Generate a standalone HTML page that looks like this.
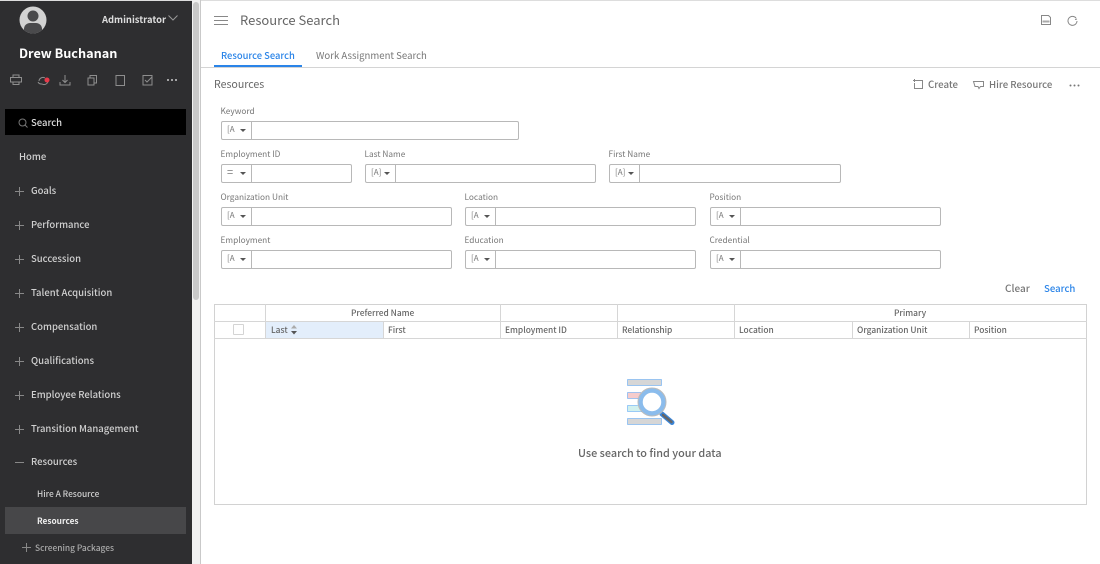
<!DOCTYPE html>
<html><head><meta charset="utf-8"><style>
*{box-sizing:border-box}
html,body{margin:0;padding:0;width:1100px;height:564px;overflow:hidden;background:#fff;font-family:"Noto Sans CJK KR","Liberation Sans",sans-serif;color:#666}
div,span{position:absolute;white-space:nowrap}
svg{position:absolute;overflow:visible}
#r{left:0;top:0;width:1100px;height:564px;overflow:hidden;background:#fff;filter:blur(.3px)}
.n{left:31px;font-size:9.5px;line-height:14px;color:#d0d0d0;font-weight:500}
.s{font-size:8.4px;font-weight:500}
.p{left:15px;width:9px;height:9px}
.p:before{content:"";position:absolute;left:4px;top:0;width:1px;height:9px;background:#888}
.p:after{content:"";position:absolute;left:0;top:4px;width:9px;height:1px;background:#888}
.l{font-size:8.3px;line-height:12px;color:#777;margin-left:-.5px}
.f{height:19px;border:1px solid #b8b8b8;border-radius:2px;background:#fff}
.f i{position:absolute;left:29px;top:0;width:1px;height:17px;background:#b8b8b8}
.f b{position:absolute;left:5px;top:1px;font:400 8px/13px "Noto Sans CJK KR",sans-serif;color:#777}
.f u{position:absolute;left:18px;top:7px;border-left:3px solid transparent;border-right:3px solid transparent;border-top:3px solid #555}
.h{font-size:8.4px;line-height:12px;color:#666;font-weight:500;margin-top:1px}
.v{width:1px;background:#d6d6d6}
.z{height:1px;background:#d6d6d6}
</style></head><body><div id="r">
<div style="left:0;top:0;width:192px;height:564px;background:#2e2e30"></div>
<div style="left:0;top:0;width:1100px;height:1px;background:#ddd"></div>
<div style="left:192px;top:0;width:8px;height:564px;background:#f1f1f1"></div>
<div style="left:193px;top:2px;width:6px;height:298px;background:#c8c8c8;border-radius:3px"></div>
<div style="left:200px;top:0;width:1px;height:564px;background:#c9c9c9"></div>

<svg style="left:19px;top:6px" width="28" height="28" viewBox="0 0 28 28"><defs><clipPath id="c"><circle cx="14" cy="14" r="13.500"/></clipPath></defs><circle cx="14" cy="14" r="13.500" fill="#d2d2d2"/><g clip-path="url(#c)" fill="#4a4a4c"><circle cx="14" cy="10" r="5.500"/><rect x="5" y="17" width="18" height="14" rx="6"/></g></svg>
<div style="left:102px;top:12px;font-size:9.400px;line-height:14px;font-weight:700;color:#ddd">Administrator</div>
<svg style="left:168px;top:15px" width="10" height="6"><path d="M.5.5 5 5 9.500.5" fill="none" stroke="#999"/></svg>
<div style="left:19px;top:43px;font-size:12.700px;line-height:20px;font-weight:700;color:#fff">Drew Buchanan</div>

<svg style="left:10px;top:74px" width="170" height="13" fill="none" stroke="#8e8e8e" stroke-width="1">
<path d="M3 3.500V1h6v2.500M.5 3.500h11V8h-11zM3 8v2.500h6V8"/>
<path d="M29 7a4 4 0 0 1 6-3M38 6a4 4 0 0 1-6 4 4 4 0 0 1-4-2"/><circle cx="37" cy="6" r="2.500" fill="#e8394a" stroke="none"/>
<path d="M55 1v7M52.500 6 55 8.500 57.500 6M50 8v3h10V8"/>
<path d="M78 4h6v7h-6zM80 4V1.500h6.500V9H84"/>
<path d="M106 1.500h8.500v10H106z"/>
<path d="M133 1.500h9v9.500h-9zM135 6l2 2 5-5"/>
<path d="M157 6h2M161 6h2M165 6h2" stroke="#ccc" stroke-width="1.500"/>
</svg>

<div style="left:5px;top:109px;width:181px;height:26px;background:#000"></div>
<svg style="left:18px;top:118px" width="10" height="10" fill="none" stroke="#777"><circle cx="4.500" cy="4.500" r="3.500"/><path d="M7 7l2.500 2.500"/></svg>
<div class="n" style="top:115px;color:#ddd">Search</div>
<div class="n" style="left:19px;top:149px">Home</div>

<div class="p" style="top:187px"></div><div class="n" style="top:183px">Goals</div>
<div class="p" style="top:221px"></div><div class="n" style="top:217px">Performance</div>
<div class="p" style="top:255px"></div><div class="n" style="top:251px">Succession</div>
<div class="p" style="top:289px"></div><div class="n" style="top:285px">Talent Acquisition</div>
<div class="p" style="top:323px"></div><div class="n" style="top:319px">Compensation</div>
<div class="p" style="top:357px"></div><div class="n" style="top:353px">Qualifications</div>
<div class="p" style="top:391px"></div><div class="n" style="top:387px">Employee Relations</div>
<div class="p" style="top:425px"></div><div class="n" style="top:421px">Transition Management</div>
<div style="left:15px;top:462px;width:9px;height:1px;background:#888"></div><div class="n" style="top:454px">Resources</div>
<div class="n s" style="left:37px;top:487px">Hire A Resource</div>
<div style="left:5px;top:507px;width:181px;height:27px;background:#474749"></div>
<div class="n s" style="left:37px;top:514px;font-weight:700;color:#eee;font-size:8.300px">Resources</div>
<div class="p" style="left:22px;top:543px"></div><div class="n s" style="left:35px;top:541px;color:#aaa">Screening Packages</div>

<svg style="left:214px;top:16px" width="14" height="9" stroke="#888"><path d="M0 .5h14M0 4.500h14M0 8.500h14"/></svg>
<div style="left:240px;top:11px;font-size:13px;line-height:18px;color:#666">Resource Search</div>
<svg style="left:1041px;top:15px" width="38" height="11" fill="none" stroke="#888"><path d="M.5.5h7l2 2v7h-9z"/><path d="M1.500 6.500h7" stroke-width="2" stroke="#aaa"/><path d="M35 3a4.500 4.500 0 1 0 1 3M36 4l-2 .5"/></svg>

<div style="left:221px;top:48px;font-size:9.400px;line-height:14px;font-weight:500;color:#2a84e8">Resource Search</div>
<div style="left:316px;top:48px;font-size:9.600px;line-height:14px;color:#777">Work Assignment Search</div>
<div style="left:201px;top:67px;width:899px;height:1px;background:#d4d4d4"></div>
<div style="left:214px;top:65px;width:88px;height:2px;background:#2a84e8"></div>

<div style="left:214px;top:77px;font-size:10.600px;line-height:15px;color:#666">Resources</div>
<svg style="left:913px;top:79px" width="10" height="10" fill="none" stroke="#888"><path d="M3 1.500h6.500v8h-8V4M1.500 0v3M0 1.500h3"/></svg>
<div style="left:928px;top:78px;font-size:9.700px;line-height:13px;color:#777;font-weight:500">Create</div>
<svg style="left:973px;top:80px" width="11" height="9" fill="none" stroke="#888"><path d="M.5 1.500h10v5h-3l-1.500 2-1-2H2z"/></svg>
<div style="left:989px;top:78px;font-size:9.600px;line-height:13px;color:#777;font-weight:500">Hire Resource</div>
<svg style="left:1069px;top:84px" width="11" height="3" fill="#777"><circle cx="1.500" cy="1.500" r="1"/><circle cx="5.500" cy="1.500" r="1"/><circle cx="9.500" cy="1.500" r="1"/></svg>

<div class="l" style="left:221px;top:105px">Keyword</div>
<div class="f" style="left:221px;top:121px;width:298px"><b>[A</b><u></u><i></i></div>

<div class="l" style="left:221px;top:148px">Employment ID</div>
<div class="f" style="left:221px;top:164px;width:131px"><b style="font-size:11px">=</b><u></u><i></i></div>
<div class="l" style="left:365px;top:148px">Last Name</div>
<div class="f" style="left:365px;top:164px;width:231px"><b>[A]</b><u></u><i></i></div>
<div class="l" style="left:609px;top:148px">First Name</div>
<div class="f" style="left:609px;top:164px;width:232px"><b>[A]</b><u></u><i></i></div>

<div class="l" style="left:221px;top:191px">Organization Unit</div>
<div class="f" style="left:221px;top:207px;width:231px"><b>[A</b><u></u><i></i></div>
<div class="l" style="left:465px;top:191px">Location</div>
<div class="f" style="left:465px;top:207px;width:231px"><b>[A</b><u></u><i></i></div>
<div class="l" style="left:710px;top:191px">Position</div>
<div class="f" style="left:710px;top:207px;width:231px"><b>[A</b><u></u><i></i></div>

<div class="l" style="left:221px;top:234px">Employment</div>
<div class="f" style="left:221px;top:250px;width:231px"><b>[A</b><u></u><i></i></div>
<div class="l" style="left:465px;top:234px">Education</div>
<div class="f" style="left:465px;top:250px;width:231px"><b>[A</b><u></u><i></i></div>
<div class="l" style="left:710px;top:234px">Credential</div>
<div class="f" style="left:710px;top:250px;width:231px"><b>[A</b><u></u><i></i></div>

<div style="left:1005px;top:281px;font-size:10px;line-height:14px;color:#777;font-weight:500">Clear</div>
<div style="left:1044px;top:281px;font-size:9.600px;line-height:14px;font-weight:500;color:#2a84e8">Search</div>

<div style="left:214px;top:304px;width:873px;height:201px;border:1px solid #d2d2d2"></div>
<div style="left:266px;top:321px;width:117px;height:18px;background:#e3eefb"></div>
<div class="z" style="left:214px;top:321px;width:873px"></div>
<div class="z" style="left:214px;top:338px;width:873px"></div>
<div class="v" style="left:265px;top:304px;height:35px"></div>
<div class="v" style="left:383px;top:321px;height:18px"></div>
<div class="v" style="left:500px;top:304px;height:35px"></div>
<div class="v" style="left:617px;top:304px;height:35px"></div>
<div class="v" style="left:734px;top:304px;height:35px"></div>
<div class="v" style="left:852px;top:321px;height:18px"></div>
<div class="v" style="left:969px;top:321px;height:18px"></div>
<div style="left:233px;top:324px;width:11px;height:11px;border:1px solid #d4d4d4;border-radius:1px"></div>
<div class="h" style="left:351px;top:306px">Preferred Name</div>
<div class="h" style="left:894px;top:306px">Primary</div>
<div class="h" style="left:271px;top:323px">Last</div>
<svg style="left:291px;top:325px" width="6" height="10"><path d="M3 0 6 3.500H0z" fill="#aaa"/><path d="M3 9.500 6 6H0z" fill="#555"/></svg>
<div class="h" style="left:388px;top:323px">First</div>
<div class="h" style="left:505px;top:323px">Employment ID</div>
<div class="h" style="left:622px;top:323px">Relationship</div>
<div class="h" style="left:739px;top:323px">Location</div>
<div class="h" style="left:857px;top:323px">Organization Unit</div>
<div class="h" style="left:974px;top:323px">Position</div>

<svg style="left:626px;top:378px" width="50" height="50">
<g stroke="#4a9df5" stroke-dasharray="1 1"><rect x="1.500" y="1.500" width="34" height="6" fill="#d6d6d6"/><rect x="1.500" y="14.500" width="34" height="6" fill="#f6cccc"/><rect x="1.500" y="27.500" width="34" height="6" fill="#d0f0ee"/><rect x="1.500" y="40.500" width="34" height="6" fill="#d6d6d6"/></g>
<path d="M36 36l10 8.500" stroke="#3a85d8" stroke-width="5" stroke-linecap="round"/><path d="M37 37l8.500 7" stroke="#666" stroke-width="2.500" stroke-linecap="round"/>
<circle cx="26" cy="24" r="11.500" fill="#fff" stroke="#8bbcec" stroke-width="4.500"/><circle cx="26" cy="24" r="14" fill="none" stroke="#bbb" stroke-width="1"/>
</svg>
<div style="left:578px;top:446px;font-size:10.850px;line-height:15px;font-weight:500;color:#666">Use search to find your data</div>
</div></body></html>
